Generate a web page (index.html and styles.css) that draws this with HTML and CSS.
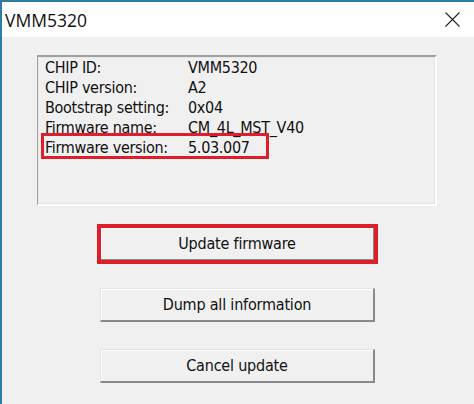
FILE: index.html
```html
<!DOCTYPE html>
<html>
<head>
<meta charset="utf-8">
<link rel="stylesheet" href="styles.css">
</head>
<body>
<div class="window">
  <div class="titlebar">
    <span class="title">VMM5320</span>
    <span class="close">
      <svg width="15" height="15" viewBox="0 0 15 15"><path d="M0.5 0.5 L14.5 14.5 M14.5 0.5 L0.5 14.5" stroke="#222" stroke-width="1.1" fill="none"/></svg>
    </span>
  </div>
  <div class="content">
    <div class="infobox">
      <div class="row"><span class="label">CHIP ID:</span><span class="value">VMM5320</span></div>
      <div class="row"><span class="label">CHIP version:</span><span class="value">A2</span></div>
      <div class="row"><span class="label">Bootstrap setting:</span><span class="value">0x04</span></div>
      <div class="row"><span class="label">Firmware name:</span><span class="value">CM_4L_MST_V40</span></div>
      <div class="row"><span class="label">Firmware version:</span><span class="value">5.03.007</span></div>
      <div class="mark mark-row"></div>
    </div>
    <div class="buttons">
      <div class="btn-wrap">
        <button class="btn">Update firmware</button>
        <div class="mark mark-btn"></div>
      </div>
      <button class="btn">Dump all information</button>
      <button class="btn">Cancel update</button>
    </div>
  </div>
</div>
</body>
</html>
```
FILE: styles.css
```css
html, body {
  margin: 0;
  padding: 0;
}
body {
  width: 474px;
  height: 404px;
  overflow: hidden;
  font-family: "DejaVu Sans Condensed", "DejaVu Sans", sans-serif;
}
.window {
  box-sizing: border-box;
  width: 474px;
  height: 404px;
  border-top: 2px solid #2d7ca3;
  border-left: 2px solid #2d7ca3;
  background: #f0f0f0;
  display: flex;
  flex-direction: column;
}
.titlebar {
  height: 35px;
  background: #ffffff;
  display: flex;
  align-items: center;
  justify-content: space-between;
  padding-left: 3px;
  padding-right: 14px;
}
.title {
  font-family: "Open Sans", "Noto Sans", sans-serif;
  font-size: 17.5px;
  color: #111;
}
.close {
  display: flex;
  margin-top: -1px;
}
.content {
  display: flex;
  flex-direction: column;
  padding-top: 18px;
  padding-left: 35px;
}
.infobox {
  position: relative;
  box-sizing: border-box;
  width: 400px;
  height: 151px;
  border-top: 2px solid #a0a0a0;
  border-left: 1px solid #a0a0a0;
  border-right: 2px solid #ffffff;
  border-bottom: 2px solid #ffffff;
  box-shadow: inset -1px -1px 0 #e3e3e3, inset 1px 1px 0 #e8e8e8;
  padding: 1px 0 0 7px;
  font-size: 16px;
  letter-spacing: -0.3px;
  color: #111;
}
.row {
  display: grid;
  grid-template-columns: 143px auto;
  line-height: 20px;
  height: 20px;
}
.mark {
  position: absolute;
  box-sizing: border-box;
  border: 3px solid #de1f2b;
  pointer-events: none;
}
.mark-row {
  left: 3px;
  top: 76px;
  width: 228px;
  height: 26px;
}
.buttons {
  display: flex;
  flex-direction: column;
  gap: 27px;
  padding-top: 21px;
  padding-left: 63px;
}
.btn-wrap {
  position: relative;
  width: 275px;
  height: 34px;
}
.btn {
  box-sizing: border-box;
  width: 275px;
  height: 34px;
  margin: 0;
  padding: 0;
  background: #f0f0f0;
  border-top: 1px solid #e3e3e3;
  border-left: 1px solid #e3e3e3;
  border-right: 2px solid #8a8a8a;
  border-bottom: 2px solid #8a8a8a;
  box-shadow: inset 1px 1px 0 #ffffff;
  font-family: "DejaVu Sans Condensed", "DejaVu Sans", sans-serif;
  font-size: 16px;
  letter-spacing: -0.2px;
  color: #111;
  text-align: center;
}
.mark-btn {
  left: -3px;
  top: -3px;
  width: 281px;
  height: 40px;
  border-width: 4px;
}
```
